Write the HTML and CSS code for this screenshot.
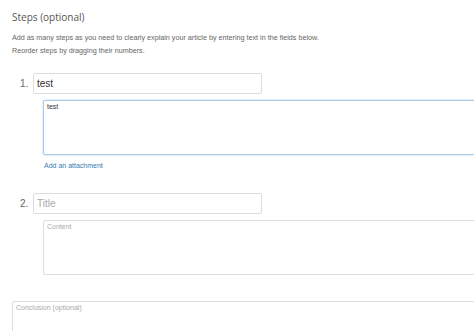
FILE: index.html
```html
<!DOCTYPE html>
<html lang="en">
<head>
  <meta charset="UTF-8">
  <title>Steps</title>
  <link rel="stylesheet" href="styles.css">
</head>
<body>
  <div class="steps">
    <h2>Steps (optional)</h2>
    <p class="hint">Add as many steps as you need to clearly explain your article by entering text in the fields below.</p>
    <p class="hint">Reorder steps by dragging their numbers.</p>

    <!-- Step 1 -->
    <div class="step">
      <div class="step-head">
        <span class="num">1.</span>
        <input type="text" class="title" value="test" placeholder="Title">
      </div>
      <textarea class="content focused" placeholder="Content">test</textarea>
      <a class="attach" href="#">Add an attachment</a>
    </div>

    <!-- Step 2 -->
    <div class="step">
      <div class="step-head">
        <span class="num">2.</span>
        <input type="text" class="title" placeholder="Title">
      </div>
      <textarea class="content" placeholder="Content"></textarea>
    </div>

    <textarea class="conclusion" placeholder="Conclusion (optional)"></textarea>
  </div>
</body>
</html>
```

FILE: styles.css
```css
html, body {
  margin: 0;
  padding: 0;
  overflow: hidden;
  background: #fff;
}

body {
  font-family: 'Liberation Sans', Arial, sans-serif;
  color: #555;
}

.steps {
  padding: 10px 0 0 12px;
  width: 520px;
}

h2 {
  font-family: 'Open Sans', sans-serif;
  font-weight: normal;
  font-size: 10px;
  line-height: 14px;
  color: #555;
  margin: 0;
}

.hint {
  font-size: 7.2px;
  line-height: 8px;
  color: #666;
  margin: 5px 0 0;
}

h2 + .hint {
  margin-top: 10px;
}

.step {
  margin-top: 18px;
  padding-left: 8px;
}

.step + .step {
  margin-top: 23px;
}

.step-head {
  display: flex;
  align-items: center;
}

.num {
  width: 13px;
  font-size: 10px;
  color: #666;
}

input, textarea {
  font-family: 'Liberation Sans', Arial, sans-serif;
  box-sizing: border-box;
  border: 1px solid #ddd;
  border-radius: 2px;
  background: #fff;
  color: #333;
  outline: none;
  resize: none;
}

.title {
  width: 229px;
  height: 21px;
  padding: 0 3px;
  font-size: 10px;
}

.title::placeholder, textarea::placeholder {
  color: #aaa;
}

.content {
  display: block;
  width: 460px;
  height: 55px;
  margin: 6px 0 0 23px;
  padding: 2px 3px;
  font-size: 7px;
}

.content.focused {
  border-color: #a9c9e4;
  box-shadow: 0 0 2px rgba(102, 160, 210, 0.5);
}

.attach {
  display: block;
  margin: 7px 0 0 24px;
  font-size: 7px;
  line-height: 8px;
  color: #3a7ab0;
  text-decoration: none;
}

.conclusion {
  display: block;
  width: 500px;
  height: 50px;
  margin-top: 26px;
  padding: 2px 3px;
  font-size: 7px;
}
```
